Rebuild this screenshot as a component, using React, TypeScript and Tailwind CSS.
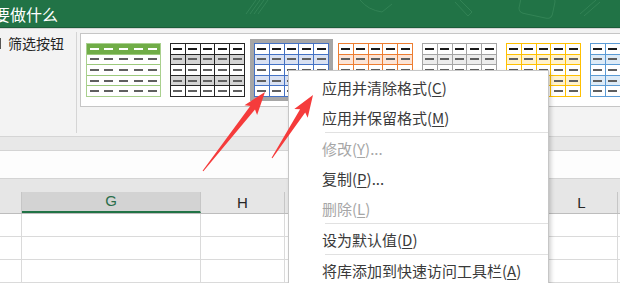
// Excel 表格样式右键菜单截图

type Thumb = {
  outer: string;
  line: string;
  head: string;
  headDash: string;
  band: string;
  v: boolean;
  sel?: boolean;
};

const thumbs: Thumb[] = [
  { outer: "border-[#a9d08e]", line: "border-[#9cc97c]", head: "bg-[#70ad47]", headDash: "bg-white", band: "bg-white", v: false },
  { outer: "border-[#262626]", line: "border-[#262626]", head: "bg-white", headDash: "bg-[#1a1a1a]", band: "bg-[#d4d4d4]", v: true },
  { outer: "border-[#4472c4]", line: "border-[#4472c4]", head: "bg-white", headDash: "bg-[#1a1a1a]", band: "bg-[#d9e1f2]", v: true, sel: true },
  { outer: "border-[#ed7d31]", line: "border-[#ed7d31]", head: "bg-white", headDash: "bg-[#1a1a1a]", band: "bg-[#fce4d6]", v: true },
  { outer: "border-[#a5a5a5]", line: "border-[#a5a5a5]", head: "bg-white", headDash: "bg-[#1a1a1a]", band: "bg-[#ededed]", v: true },
  { outer: "border-[#ffc000]", line: "border-[#ffc000]", head: "bg-white", headDash: "bg-[#1a1a1a]", band: "bg-[#fff2cc]", v: true },
  { outer: "border-[#5b9bd5]", line: "border-[#5b9bd5]", head: "bg-white", headDash: "bg-[#1a1a1a]", band: "bg-[#ddebf7]", v: true },
];

function TableThumb({ t }: { t: Thumb }) {
  return (
    <div
      className={`flex h-[54px] w-[75px] shrink-0 flex-col border ${t.outer} ${
        t.sel ? "shadow-[0_0_0_4px_#a6a6a6]" : ""
      }`}
    >
      {[0, 1, 2, 3, 4].map((r) => (
        <div
          key={r}
          className={`flex flex-1 ${r < 4 ? "border-b " + t.line : ""} ${
            r === 0 ? t.head : r % 2 === 1 ? t.band : "bg-white"
          }`}
        >
          {[0, 1, 2, 3, 4].map((c) => (
            <div
              key={c}
              className={`flex flex-1 items-center justify-center ${
                t.v && c < 4 ? "border-r " + t.line : ""
              }`}
            >
              <span
                className={`h-[2px] w-[9px] ${
                  r === 0 ? t.headDash : "bg-[#5f5f5f]"
                }`}
              />
            </div>
          ))}
        </div>
      ))}
    </div>
  );
}

type Item = { t: string; k: string; end?: string; dis?: boolean } | "sep";

const items: Item[] = [
  { t: "应用并清除格式", k: "C" },
  { t: "应用并保留格式", k: "M" },
  "sep",
  { t: "修改", k: "Y", end: "...", dis: true },
  { t: "复制", k: "P", end: "..." },
  { t: "删除", k: "L", dis: true },
  "sep",
  { t: "设为默认值", k: "D" },
  "sep",
  { t: "将库添加到快速访问工具栏", k: "A" },
];

// I、J、K 列被菜单挡住，不写列名
const cols = [
  { n: "", w: "w-[22px]" },
  { n: "G", w: "w-[179px]", sel: true },
  { n: "H", w: "w-[84px]" },
  { n: "", w: "w-[87px]" },
  { n: "", w: "w-[87px]" },
  { n: "", w: "w-[87px]" },
  { n: "L", w: "w-[72px]" },
];

function arrow(tx: number, ty: number, hx: number, hy: number, len = 20, hw = 8) {
  const dx = hx - tx;
  const dy = hy - ty;
  const d = Math.hypot(dx, dy);
  const ux = dx / d;
  const uy = dy / d;
  const nx = -uy;
  const ny = ux;
  const bx = hx - ux * len;
  const by = hy - uy * len;
  const cx = bx - ux * 3;
  const cy = by - uy * 3;
  const pts = [
    [tx + nx * 0.5, ty + ny * 0.5],
    [bx + nx * 3, by + ny * 3],
    [cx + nx * hw, cy + ny * hw],
    [hx, hy],
    [cx - nx * hw, cy - ny * hw],
    [bx - nx * 3, by - ny * 3],
    [tx - nx * 0.5, ty - ny * 0.5],
  ];
  return pts.map((p) => p[0].toFixed(1) + "," + p[1].toFixed(1)).join(" ");
}

export default function App() {
  return (
    <div className="relative h-[283px] w-[620px] overflow-hidden bg-white font-['Noto_Sans_CJK_SC','Noto_Sans',sans-serif]">
      {/* 标题栏 */}
      <div className="relative flex h-[28px] items-center overflow-hidden border-b border-[#1b5c39] bg-[#217346]">
        <span className="-ml-[6px] text-[16px] leading-none text-white">要做什么</span>
        <svg className="pointer-events-none absolute inset-0" width="620" height="28">
          <g stroke="#3a8a5c" strokeWidth="1" fill="none" opacity="0.7">
            <path d="M246 14 L256 0 M250 14 L260 0 M254 14 L264 0 M258 14 L268 0" />
            <path d="M360 0 Q368 10 382 12 L392 4" />
            <path d="M455 2 L468 16 L472 12 L460 0" />
            <rect x="520" y="-6" width="34" height="22" rx="5" transform="rotate(12 537 5)" />
            <path d="M580 14 L596 0 M584 16 L600 2" />
          </g>
        </svg>
      </div>

      {/* 功能区 */}
      <div className="flex h-[109px] border-y border-[#d5d5d5] bg-[#f3f3f3]">
        <div className="my-[3px] w-[77px] shrink-0 border-r border-[#d5d5d5]">
          <div className="-ml-[10px] mt-[1px] flex h-[20px] items-center gap-[7px]">
            <span className="h-[11px] w-[11px] border border-[#555] bg-white" />
            <span className="text-[14px] leading-none text-[#262626]">筛选按钮</span>
          </div>
        </div>
        <div className="ml-[3px] mt-[4px] flex h-[74px] w-[560px] shrink-0 gap-[9px] border border-[#c6c6c6] bg-white pl-[5px] pt-[9px]">
          {thumbs.map((t, i) => (
            <TableThumb key={i} t={t} />
          ))}
        </div>
      </div>

      {/* 编辑栏 */}
      <div className="h-[14px] border-b border-[#d4d4d4] bg-[#e8e8e8]" />
      <div className="h-[28px] border-b border-[#d4d4d4] bg-[#fdfdfd]" />
      <div className="h-[13px] bg-[#e6e6e6]" />

      {/* 列标题 */}
      <div className="flex h-[22px] border-b border-[#bdbdbd] bg-[#e6e6e6]">
        {cols.map((c, i) => (
          <div
            key={i}
            className={`flex shrink-0 items-end justify-center border-r border-[#c6c6c6] pb-[1px] text-[15px] leading-[18px] font-['Liberation_Sans',sans-serif] ${c.w} ${
              c.sel ? "border-b-2 border-b-[#217346] bg-[#d3d3d3] text-[#2a6e4a]" : "text-[#262626]"
            }`}
          >
            {c.n}
          </div>
        ))}
      </div>

      {/* 单元格 */}
      {[0, 1, 2].map((r) => (
        <div key={r} className="flex h-[23px] border-b border-[#dadada]">
          {cols.map((c, i) => (
            <div key={i} className={`shrink-0 border-r border-[#dadada] ${c.w}`} />
          ))}
        </div>
      ))}

      {/* 右键菜单 */}
      <div className="absolute left-[288px] top-[70px] w-[261px] border border-[#c6c6c6] bg-white pt-[1px] shadow-[2px_2px_4px_rgba(0,0,0,0.18)]">
        {items.map((it, i) =>
          it === "sep" ? (
            <div key={i} className="ml-[36px] h-px bg-[#e1e1e1]" />
          ) : (
            <div
              key={i}
              className={`flex h-[30px] items-center pl-[33px] text-[15px] leading-none ${
                it.dis ? "text-[#a6a6a6]" : "text-[#3a3a3a]"
              }`}
            >
              {it.t}(<span className="underline underline-offset-2">{it.k}</span>){it.end}
            </div>
          )
        )}
      </div>

      {/* 红色箭头 */}
      <svg className="pointer-events-none absolute inset-0" width="620" height="283">
        <polygon points={arrow(203, 171, 265, 92)} fill="#f53b3b" />
        <polygon points={arrow(272, 158, 313, 95, 19, 8)} fill="#f53b3b" />
      </svg>
    </div>
  );
}
